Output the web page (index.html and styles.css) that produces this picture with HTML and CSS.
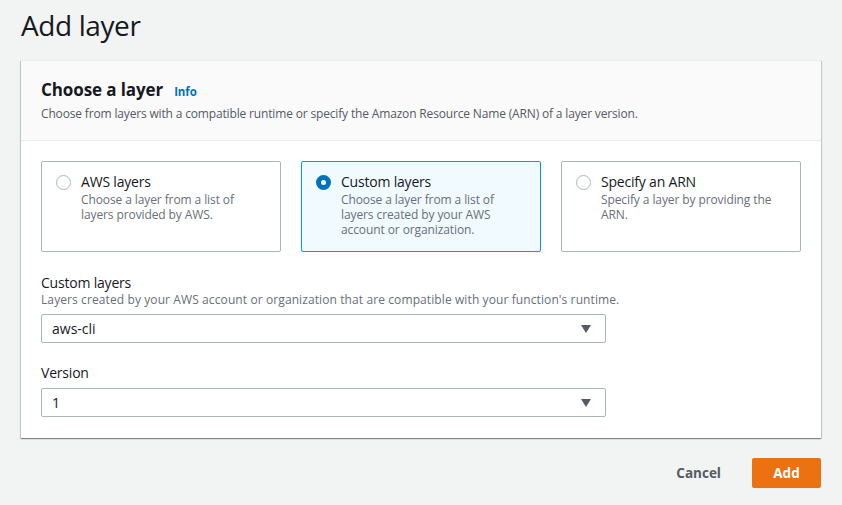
FILE: index.html
```html
<!DOCTYPE html>
<html>
<head>
<meta charset="utf-8">
<link rel="stylesheet" href="styles.css">
</head>
<body>
<div class="page">
  <h1 class="title">Add layer</h1>
  <div class="card">
    <div class="card-header">
      <div class="card-title"><span>Choose a layer</span><a class="info">Info</a></div>
      <div class="card-desc">Choose from layers with a compatible runtime or specify the Amazon Resource Name (ARN) of a layer version.</div>
    </div>
    <div class="card-body">
      <div class="tiles">
        <div class="tile">
          <span class="radio"></span>
          <div class="tile-text">
            <div class="tile-title">AWS layers</div>
            <div class="tile-desc">Choose a layer from a list of layers provided by AWS.</div>
          </div>
        </div>
        <div class="tile selected">
          <span class="radio checked"></span>
          <div class="tile-text">
            <div class="tile-title">Custom layers</div>
            <div class="tile-desc">Choose a layer from a list of layers created by your AWS account or organization.</div>
          </div>
        </div>
        <div class="tile">
          <span class="radio"></span>
          <div class="tile-text">
            <div class="tile-title">Specify an ARN</div>
            <div class="tile-desc">Specify a layer by providing the ARN.</div>
          </div>
        </div>
      </div>
      <div class="field">
        <div class="label">Custom layers</div>
        <div class="hint">Layers created by your AWS account or organization that are compatible with your function's runtime.</div>
        <div class="select"><span>aws-cli</span><span class="caret"></span></div>
      </div>
      <div class="field">
        <div class="label">Version</div>
        <div class="select"><span>1</span><span class="caret"></span></div>
      </div>
    </div>
  </div>
  <div class="actions">
    <button class="btn-link">Cancel</button>
    <button class="btn-primary">Add</button>
  </div>
</div>
</body>
</html>
```
FILE: styles.css
```css
html, body {
  margin: 0;
  padding: 0;
  background: #f2f3f3;
}
body {
  font-family: "Open Sans", "Noto Sans", Arial, sans-serif;
  color: #16191f;
  font-size: 12px;
}
.page {
  padding: 0 21px 0 21px;
  width: 800px;
}
.title {
  margin: 0;
  padding-top: 6px;
  height: 60px;
  box-sizing: border-box;
  font-size: 28px;
  font-weight: 400;
  line-height: 38px;
  letter-spacing: -0.4px;
  color: #16191f;
}
.card {
  background: #fff;
  box-shadow: 0 1px 1px 0 rgba(0,28,36,.3), 1px 1px 1px 0 rgba(0,28,36,.15), -1px 1px 1px 0 rgba(0,28,36,.15);
  border-top: 1px solid #eaeded;
}
.card-header {
  background: #fafafa;
  border-bottom: 1px solid #eaeded;
  padding: 17px 20px 0 20px;
  height: 80px;
  box-sizing: border-box;
}
.card-title {
  display: flex;
  align-items: baseline;
  gap: 11px;
  font-size: 17px;
  font-weight: 700;
  line-height: 24px;
  letter-spacing: -0.1px;
}
.info {
  font-size: 11.5px;
  font-weight: 700;
  color: #0073bb;
}
.card-desc {
  font-size: 12px;
  line-height: 18px;
  color: #545b64;
  margin-top: 1px;
  letter-spacing: -0.16px;
}
.card-body {
  padding: 20px 20px 21px 20px;
}
.tiles {
  display: grid;
  grid-template-columns: 240px 240px 240px;
  column-gap: 20px;
}
.tile {
  height: 91px;
  box-sizing: border-box;
  border: 1px solid #aab7b8;
  border-radius: 2px;
  display: flex;
  gap: 10px;
  padding: 11px 14px 0 14px;
  background: #fff;
}
.tile.selected {
  border-color: #00a1c9;
  background: #f1faff;
}
.radio {
  flex: none;
  width: 15px;
  height: 15px;
  box-sizing: border-box;
  border: 1px solid #aab7b8;
  border-radius: 50%;
  background: #fff;
  margin-top: 2px;
}
.radio.checked {
  border: 5px solid #0073bb;
}
.tile-title {
  font-size: 14px;
  line-height: 18px;
  letter-spacing: -0.2px;
  color: #16191f;
}
.tile-desc {
  font-size: 12px;
  line-height: 15px;
  letter-spacing: -0.1px;
  color: #687078;
  margin-top: 1px;
}
.field {
  margin-top: 22px;
}
.field + .field {
  margin-top: 21px;
}
.label {
  font-size: 14px;
  line-height: 18px;
  letter-spacing: -0.2px;
  color: #16191f;
}
.hint {
  font-size: 12px;
  line-height: 16px;
  letter-spacing: 0.1px;
  color: #687078;
  margin-bottom: 6px;
}
.field .label + .select {
  margin-top: 6px;
}
.select {
  width: 565px;
  height: 29px;
  box-sizing: border-box;
  border: 1px solid #aab7b8;
  border-radius: 2px;
  background: #fff;
  display: flex;
  align-items: center;
  justify-content: space-between;
  padding: 0 14px 0 10px;
  font-size: 14px;
  color: #16191f;
}
.caret {
  width: 0;
  height: 0;
  border-left: 5px solid transparent;
  border-right: 5px solid transparent;
  border-top: 8px solid #545b64;
}
.actions {
  display: flex;
  justify-content: flex-end;
  align-items: center;
  gap: 14px;
  margin-top: 20px;
}
button {
  font-family: inherit;
  border: none;
  cursor: pointer;
}
.btn-link {
  background: transparent;
  color: #545b64;
  font-weight: 700;
  font-size: 13.5px;
  padding: 0 17px;
  height: 30px;
}
.btn-primary {
  background: #ec7211;
  color: #fff;
  font-weight: 700;
  font-size: 13.5px;
  width: 69px;
  height: 30px;
  border-radius: 2px;
}
```
